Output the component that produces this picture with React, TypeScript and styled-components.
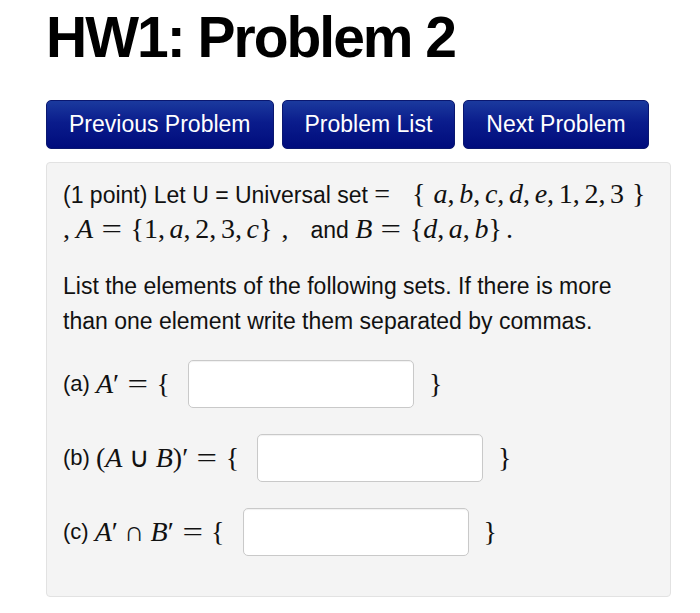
import React from 'react'
import styled, { createGlobalStyle } from 'styled-components'

const GlobalStyle = createGlobalStyle`
  html, body {
    margin: 0;
    padding: 0;
    background: #ffffff;
  }
  body {
    font-family: 'Liberation Sans', Arial, Helvetica, sans-serif;
    color: #111;
  }
`

const Page = styled.div`
  padding: 6px 0 0 46px;
  width: 625px;
`

const Title = styled.h1`
  margin: 0;
  font-size: 57px;
  line-height: 63px;
  font-weight: 700;
  letter-spacing: -2px;
  color: #000;
`

const NavBar = styled.div`
  display: flex;
  gap: 8px;
  margin-top: 31px;
`

const NavButton = styled.button`
  height: 49px;
  padding: 0 22px;
  border: 1px solid #0a1770;
  border-radius: 5px;
  background: linear-gradient(to bottom, #1b3a9e 0%, #0a1c8c 45%, #000c7c 100%);
  color: #fff;
  font-family: 'Liberation Sans', Arial, sans-serif;
  font-size: 23px;
  cursor: pointer;
`

const Panel = styled.div`
  margin-top: 13px;
  background: #f4f4f4;
  border: 1px solid #e2e2e2;
  border-radius: 4px;
  padding: 15px 16px 40px;
`

const Para = styled.p`
  margin: 0 0 21px;
  font-size: 23px;
  line-height: 35px;
`

// math run, serif like MathJax output
const M = styled.span`
  font-family: 'Liberation Serif', 'Times New Roman', serif;
  font-size: 28px;
  line-height: 0;
  white-space: nowrap;
`

const Var = styled.span`
  font-style: italic;
`

// relation: wide "=" with thick spaces
const Rel = styled.span`
  display: inline-block;
  width: 0.778em;
  margin: 0 0.278em;
  text-align: center;
  transform: scaleX(1.3);
`

// binary operator with medium spaces
const Bin = styled.span`
  margin: 0 0.222em;
`

const Punct = styled.span`
  margin-right: 0.167em;
`

const Sp = styled.span<{ $w: number }>`
  display: inline-block;
  width: ${({ $w }) => $w}px;
`

const Rows = styled.div`
  display: flex;
  flex-direction: column;
  gap: 26px;
  margin-top: 18px;
`

const Row = styled.div`
  display: flex;
  align-items: center;
  height: 48px;
`

const Label = styled.span`
  font-size: 22px;
  margin-right: 6px;
`

const Answer = styled.input`
  width: 226px;
  height: 48px;
  box-sizing: border-box;
  border: 1px solid #c9c9c9;
  border-radius: 5px;
  background: #fff;
  margin: 0 15px 0 18px;
  box-shadow: inset 0 1px 1px rgba(0, 0, 0, 0.06);
`

const C = () => <Punct>,</Punct>

export default function App() {
  return (
    <Page>
      <GlobalStyle />
      <Title>HW1: Problem 2</Title>
      <NavBar>
        <NavButton>Previous Problem</NavButton>
        <NavButton>Problem List</NavButton>
        <NavButton>Next Problem</NavButton>
      </NavBar>
      <Panel>
        <Para>
          (1 point) Let U = Universal set{' '}
          <M>
            =<Sp $w={22} />
            {'{'}
            <Sp $w={8} />
            <Var>a</Var>
            <C />
            <Var>b</Var>
            <C />
            <Var>c</Var>
            <C />
            <Var>d</Var>
            <C />
            <Var>e</Var>
            <C />1<C />2<C />3<Sp $w={8} />
            {'}'}
          </M>
          <br />
          <M>
            ,<Sp $w={6} />
            <Var>A</Var>
            <Rel>=</Rel>
            {'{'}1<C />
            <Var>a</Var>
            <C />2<C />3<C />
            <Var>c</Var>
            {'}'}
            <Sp $w={9} />,
          </M>
          <Sp $w={22} />
          and{' '}
          <M>
            <Var>B</Var>
            <Rel>=</Rel>
            {'{'}
            <Var>d</Var>
            <C />
            <Var>a</Var>
            <C />
            <Var>b</Var>
            {'}'}
            <Sp $w={4} />.
          </M>
        </Para>
        <Para>
          List the elements of the following sets. If there is more than one element write them separated by commas.
        </Para>
        <Rows>
          <Row>
            <Label>(a)</Label>
            <M>
              <Var>A</Var>′<Rel>=</Rel>
              {'{'}
            </M>
            <Answer type="text" />
            <M>{'}'}</M>
          </Row>
          <Row>
            <Label>(b)</Label>
            <M>
              (<Var>A</Var>
              <Bin>∪</Bin>
              <Var>B</Var>)′<Rel>=</Rel>
              {'{'}
            </M>
            <Answer type="text" />
            <M>{'}'}</M>
          </Row>
          <Row>
            <Label>(c)</Label>
            <M>
              <Var>A</Var>′<Bin>∩</Bin>
              <Var>B</Var>′<Rel>=</Rel>
              {'{'}
            </M>
            <Answer type="text" />
            <M>{'}'}</M>
          </Row>
        </Rows>
      </Panel>
    </Page>
  )
}
